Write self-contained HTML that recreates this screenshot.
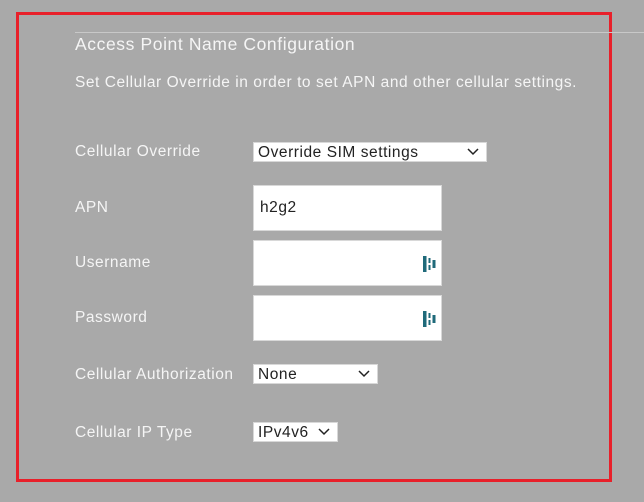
<!DOCTYPE html>
<html><head><style>
body{margin:0;width:644px;height:502px;background:#a9a9a9;position:relative;overflow:hidden;font-family:"Liberation Sans",Arial,sans-serif;color:#f5f5f5;letter-spacing:0.55px}
.a{position:absolute}
.red{left:16px;top:12px;width:590px;height:464px;border:3px solid #e8202a}
.line{left:75px;top:32px;width:569px;height:1px;background:#c8c8c8}
.lbl{font-size:15.5px;left:75px}
.box{background:#fff;border:1px solid #d8d8d8;box-sizing:border-box}
.sel{font-size:15.5px;color:#222;padding-left:4px;line-height:19px}
.chev{position:absolute;right:7px;top:5px}
.ic{position:absolute;right:5px;top:15px}
</style></head><body>
<div class="a red"></div>
<div class="a line"></div>
<div class="a" style="left:75px;top:34px;font-size:17.5px;letter-spacing:0.6px">Access Point Name Configuration</div>
<div class="a" style="left:75px;top:74px;font-size:15.5px">Set Cellular Override in order to set APN and other cellular settings.</div>

<div class="a lbl" style="top:143px">Cellular Override</div>
<div class="a box sel" style="left:253px;top:142px;width:234px;height:20px">Override SIM settings<svg class="chev" width="12" height="8" viewBox="0 0 12 8"><path d="M1 1l5 5 5-5" fill="none" stroke="#222" stroke-width="1.5"/></svg></div>

<div class="a lbl" style="top:199px">APN</div>
<div class="a box" style="left:253px;top:185px;width:189px;height:46px"><span class="a" style="left:6px;top:13px;font-size:15.5px;color:#222">h2g2</span></div>

<div class="a lbl" style="top:254px">Username</div>
<div class="a box" style="left:253px;top:240px;width:189px;height:46px"><svg class="ic" width="13" height="16" viewBox="0 0 13 16"><g fill="#1f6a7a"><rect x="0" y="0" width="3.5" height="16"/><rect x="5.5" y="2" width="2" height="5"/><rect x="5.5" y="9" width="2" height="5"/><rect x="9.5" y="4" width="3" height="8"/></g></svg></div>

<div class="a lbl" style="top:309px">Password</div>
<div class="a box" style="left:253px;top:295px;width:189px;height:46px"><svg class="ic" width="13" height="16" viewBox="0 0 13 16"><g fill="#1f6a7a"><rect x="0" y="0" width="3.5" height="16"/><rect x="5.5" y="2" width="2" height="5"/><rect x="5.5" y="9" width="2" height="5"/><rect x="9.5" y="4" width="3" height="8"/></g></svg></div>

<div class="a lbl" style="top:366px">Cellular Authorization</div>
<div class="a box sel" style="left:253px;top:364px;width:125px;height:20px">None<svg class="chev" width="12" height="8" viewBox="0 0 12 8"><path d="M1 1l5 5 5-5" fill="none" stroke="#222" stroke-width="1.5"/></svg></div>

<div class="a lbl" style="top:424px">Cellular IP Type</div>
<div class="a box sel" style="left:253px;top:422px;width:85px;height:20px">IPv4v6<svg class="chev" width="12" height="8" viewBox="0 0 12 8"><path d="M1 1l5 5 5-5" fill="none" stroke="#222" stroke-width="1.5"/></svg></div>
</body></html>
